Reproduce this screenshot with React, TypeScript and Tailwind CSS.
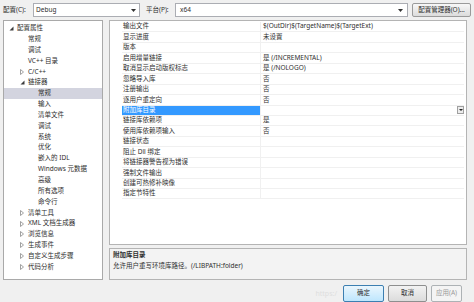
import React from "react";

const font = { fontFamily: '"Noto Sans", "Noto Sans CJK SC", sans-serif' };

type TreeItem = { label: string; level: 0 | 1 | 2; arrow?: "open" | "closed"; selected?: boolean };

const tree: TreeItem[] = [
  { label: "配置属性", level: 0, arrow: "open" },
  { label: "常规", level: 1 },
  { label: "调试", level: 1 },
  { label: "VC++ 目录", level: 1 },
  { label: "C/C++", level: 1, arrow: "closed" },
  { label: "链接器", level: 1, arrow: "open" },
  { label: "常规", level: 2, selected: true },
  { label: "输入", level: 2 },
  { label: "清单文件", level: 2 },
  { label: "调试", level: 2 },
  { label: "系统", level: 2 },
  { label: "优化", level: 2 },
  { label: "嵌入的 IDL", level: 2 },
  { label: "Windows 元数据", level: 2 },
  { label: "高级", level: 2 },
  { label: "所有选项", level: 2 },
  { label: "命令行", level: 2 },
  { label: "清单工具", level: 1, arrow: "closed" },
  { label: "XML 文档生成器", level: 1, arrow: "closed" },
  { label: "浏览信息", level: 1, arrow: "closed" },
  { label: "生成事件", level: 1, arrow: "closed" },
  { label: "自定义生成步骤", level: 1, arrow: "closed" },
  { label: "代码分析", level: 1, arrow: "closed" },
];

const rows: [string, string][] = [
  ["输出文件", "$(OutDir)$(TargetName)$(TargetExt)"],
  ["显示进度", "未设置"],
  ["版本", ""],
  ["启用增量链接", "是 (/INCREMENTAL)"],
  ["取消显示启动版权标志", "是 (/NOLOGO)"],
  ["忽略导入库", "否"],
  ["注册输出", "否"],
  ["逐用户重定向", "否"],
  ["附加库目录", ""],
  ["链接库依赖项", "是"],
  ["使用库依赖项输入", "否"],
  ["链接状态", ""],
  ["阻止 Dll 绑定", ""],
  ["将链接器警告视为错误", ""],
  ["强制文件输出", ""],
  ["创建可热修补映像", ""],
  ["指定节特性", ""],
];

function Arrow({ kind }: { kind?: "open" | "closed" }) {
  return (
    <span className="flex w-[8px] shrink-0 items-center">
      {kind === "open" && (
        <svg width="5" height="5" viewBox="0 0 5 5">
          <polygon points="4.5,0.5 4.5,4.5 0.5,4.5" fill="#3c3c3c" />
        </svg>
      )}
      {kind === "closed" && (
        <svg width="4" height="6" viewBox="0 0 4 6">
          <polygon points="0.5,0.5 3.5,3 0.5,5.5" fill="none" stroke="#8a8a8a" strokeWidth="0.8" />
        </svg>
      )}
    </span>
  );
}

function Caret() {
  return (
    <svg width="5" height="3" viewBox="0 0 5 3">
      <polygon points="0,0 5,0 2.5,3" fill="#333" />
    </svg>
  );
}

export default function App() {
  const pad = { 0: "pl-[5px]", 1: "pl-[16px]", 2: "pl-[26px]" } as const;

  return (
    <div
      style={font}
      className="relative flex h-[302px] w-[474px] flex-col overflow-hidden bg-[#f0f0f0] text-[6.5px] leading-none text-[#2e2e2e]"
    >
      {/* top bar */}
      <div className="flex h-[20px] items-start gap-[3px] px-[3px] pt-[3px]">
        <span className="flex h-[14px] w-[27px] items-center">配置(C):</span>
        <div className="flex h-[14px] w-[107px] items-center justify-between border border-[#abadb3] bg-white px-[2px]">
          <span>Debug</span>
          <span className="pr-[1px]">
            <Caret />
          </span>
        </div>
        <span className="ml-[3px] flex h-[14px] w-[26px] items-center">平台(P):</span>
        <div className="flex h-[14px] w-[233px] items-center justify-between border border-[#abadb3] bg-white px-[4px]">
          <span>x64</span>
          <span>
            <Caret />
          </span>
        </div>
        <div className="ml-[1px] flex h-[14px] w-[59px] items-center justify-center rounded-[2px] border border-[#9a9a9a] bg-gradient-to-b from-[#f7f7f7] to-[#dcdcdc]">
          配置管理器(O)...
        </div>
      </div>

      {/* main */}
      <div className="flex h-[260px] gap-[6px] pl-[3px]">
        {/* tree */}
        <div className="h-full w-[100px] border border-[#a9a9a9] bg-white pt-[2px]">
          {tree.map((t, i) => (
            <div
              key={i}
              className={`flex h-[10.85px] items-center ${pad[t.level]} ${t.selected ? "bg-[#d3d4df]" : ""}`}
            >
              <Arrow kind={t.arrow} />
              <span className="whitespace-nowrap">{t.label}</span>
            </div>
          ))}
        </div>

        {/* grid + description */}
        <div className="flex w-[358px] flex-col gap-[3px]">
          <div className="h-[225px] border border-[#b4b4b4] bg-white pt-[1px] pr-[2px]">
            {rows.map(([name, value], i) => (
              <div key={i} className="flex h-[10.45px] pl-[12px]">
                <div
                  className={`flex w-[138px] items-center border-b border-[#f0f0f0] pl-[1px] ${
                    i === 8 ? "bg-[#3399ff] text-white" : ""
                  }`}
                >
                  <span className="whitespace-nowrap">{name}</span>
                </div>
                <div className="flex flex-1 items-center justify-between border-b border-l border-[#f0f0f0] pl-[2px]">
                  <span className="whitespace-nowrap">{value}</span>
                  {i === 8 && (
                    <span className="flex h-[8px] w-[7px] items-center justify-center border border-[#a0a0a0] bg-[#ececec]">
                      <svg width="4" height="2" viewBox="0 0 4 2">
                        <polygon points="0,0 4,0 2,2" fill="#222" />
                      </svg>
                    </span>
                  )}
                </div>
              </div>
            ))}
          </div>
          <div className="flex h-[32px] flex-col gap-[4px] border border-[#b4b4b4] bg-[#f3f3f3] px-[3px] pt-[3px]">
            <span className="font-bold">附加库目录</span>
            <span>允许用户重写环境库路径。(/LIBPATH:folder)</span>
          </div>
        </div>
      </div>

      {/* bottom buttons */}
      <div className="flex items-start justify-end gap-[4px] pr-[12px] pt-[5px]">
        <span className="mr-[2px] flex h-[17px] items-center text-[7px] text-[#dedede]">https:/</span>
        <div className="flex h-[17px] w-[41px] items-center justify-center rounded-[2px] border border-[#3c7fb1] bg-gradient-to-b from-[#eaf6fd] to-[#bee6fd]">
          确定
        </div>
        <div className="flex h-[17px] w-[39px] items-center justify-center rounded-[2px] border border-[#8e8f8f] bg-gradient-to-b from-[#f2f2f2] to-[#dcdcdc]">
          取消
        </div>
        <div className="flex h-[17px] w-[31px] items-center justify-center rounded-[2px] border border-[#adb2b5] bg-[#f4f4f4] text-[#9a9a9a]">
          应用(A)
        </div>
      </div>
    </div>
  );
}
